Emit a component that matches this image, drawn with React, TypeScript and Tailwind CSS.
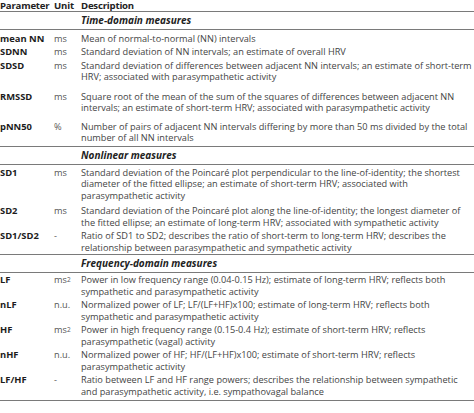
import React from "react";

type Row = { p: string; u: React.ReactNode; d: string[]; mt?: string };
type Section = { title: string; pt: string; pb: string; rows: Row[] };

const ms2 = (
  <span>
    ms<sup className="text-[6.5px] relative -top-[1px]">2</sup>
  </span>
);

const sections: Section[] = [
  {
    title: "Time-domain measures",
    pt: "pt-[1.5px]",
    pb: "pb-[1px]",
    rows: [
      { p: "mean NN", u: "ms", d: ["Mean of normal-to-normal (NN) intervals"] },
      { p: "SDNN", u: "ms", d: ["Standard deviation of NN intervals; an estimate of overall HRV"] },
      {
        p: "SDSD",
        u: "ms",
        d: [
          "Standard deviation of differences between adjacent NN intervals; an estimate of short-term",
          "HRV; associated with parasympathetic activity",
        ],
      },
      {
        p: "RMSSD",
        u: "ms",
        mt: "mt-[6px]",
        d: [
          "Square root of the mean of the sum of the squares of differences between adjacent NN",
          "intervals; an estimate of short-term HRV; associated with parasympathetic activity",
        ],
      },
      {
        p: "pNN50",
        u: "%",
        mt: "mt-[5px]",
        d: [
          "Number of pairs of adjacent NN intervals differing by more than 50 ms divided by the total",
          "number of all NN intervals",
        ],
      },
    ],
  },
  {
    title: "Nonlinear measures",
    pt: "pt-[1px]",
    pb: "pb-0",
    rows: [
      {
        p: "SD1",
        u: "ms",
        d: [
          "Standard deviation of the Poincaré plot perpendicular to the line-of-identity; the shortest",
          "diameter of the fitted ellipse; an estimate of short-term HRV; associated with",
          "parasympathetic activity",
        ],
      },
      {
        p: "SD2",
        u: "ms",
        mt: "mt-[2px]",
        d: [
          "Standard deviation of the Poincaré plot along the line-of-identity; the longest diameter of",
          "the fitted ellipse; an estimate of long-term HRV; associated with sympathetic activity",
        ],
      },
      {
        p: "SD1/SD2",
        u: "-",
        d: [
          "Ratio of SD1 to SD2; describes the ratio of short-term to long-term HRV; describes the",
          "relationship between parasympathetic and sympathetic activity",
        ],
      },
    ],
  },
  {
    title: "Frequency-domain measures",
    pt: "pt-0",
    pb: "pb-[2px]",
    rows: [
      {
        p: "LF",
        u: ms2,
        d: [
          "Power in low frequency range (0.04-0.15 Hz); estimate of long-term HRV; reflects both",
          "sympathetic and parasympathetic activity",
        ],
      },
      {
        p: "nLF",
        u: "n.u.",
        d: [
          "Normalized power of LF; LF/(LF+HF)x100; estimate of long-term HRV; reflects both",
          "sympathetic and parasympathetic activity",
        ],
      },
      {
        p: "HF",
        u: ms2,
        d: [
          "Power in high frequency range (0.15-0.4 Hz); estimate of short-term HRV; reflects",
          "parasympathetic (vagal) activity",
        ],
      },
      {
        p: "nHF",
        u: "n.u.",
        d: [
          "Normalized power of HF; HF/(LF+HF)x100; estimate of short-term HRV; reflects",
          "parasympathetic activity",
        ],
      },
      {
        p: "LF/HF",
        u: "-",
        d: [
          "Ratio between LF and HF range powers; describes the relationship between sympathetic",
          "and parasympathetic activity, i.e. sympathovagal balance",
        ],
      },
    ],
  },
];

function DataRow({ row }: { row: Row }) {
  return (
    <div className={`grid grid-cols-[54px_27px_1fr] py-[1px] leading-[11.5px] ${row.mt ?? ""}`}>
      <div className="font-bold text-[9.4px] text-[#1c1c1c] whitespace-nowrap">{row.p}</div>
      <div className="text-[#555]">{row.u}</div>
      <div className="text-[#444]">
        {row.d.map((line, i) => (
          <div key={i} className="whitespace-nowrap">
            {line}
          </div>
        ))}
      </div>
    </div>
  );
}

export default function App() {
  return (
    <div
      className="w-[474px] h-[413px] overflow-hidden bg-white text-[9.2px]"
      style={{ fontFamily: '"Open Sans", "Noto Sans", sans-serif' }}
    >
      <div className="grid grid-cols-[54px_27px_1fr] h-[12px] font-bold text-[9.6px] tracking-[-0.2px] leading-[11px] text-[#222] border-b border-[#7a7a7a]">
        <div className="whitespace-nowrap">Parameter</div>
        <div>Unit</div>
        <div>Description</div>
      </div>
      {sections.map((s) => (
        <div key={s.title} className="border-b border-[#7a7a7a]">
          <div className="grid grid-cols-[81px_1fr] py-[3px] leading-[11px] border-b border-[#7a7a7a]">
            <div />
            <div className="font-bold italic text-[10px] text-[#222]">{s.title}</div>
          </div>
          <div className={`${s.pt} ${s.pb}`}>
            {s.rows.map((r) => (
              <DataRow key={r.p} row={r} />
            ))}
          </div>
        </div>
      ))}
    </div>
  );
}
